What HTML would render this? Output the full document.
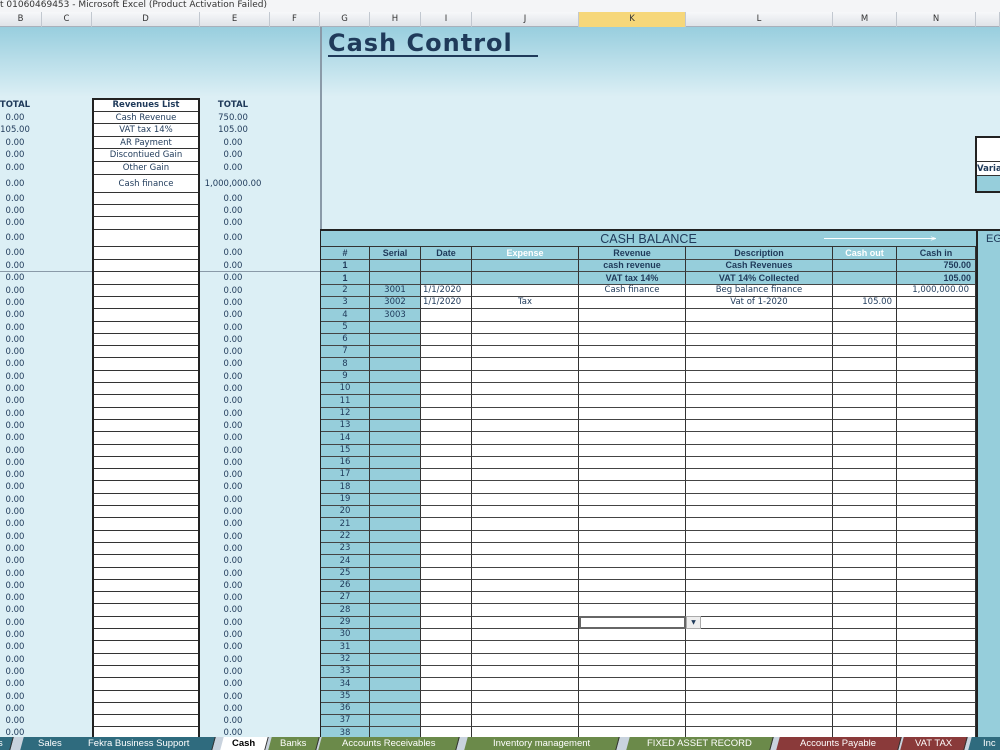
<!DOCTYPE html>
<html><head><meta charset="utf-8"><style>
*{margin:0;padding:0;box-sizing:border-box}
body{width:1000px;height:750px;overflow:hidden;position:relative;background:#dceff5;font-family:"DejaVu Sans","Liberation Sans",sans-serif;font-size:9px;color:#1f3a5a}
.a{position:absolute}
#tb{left:0;top:0;width:1000px;height:12px;background:#f4f5f7;font-size:9px;color:#333;line-height:11px;white-space:nowrap}
#ch{left:0;top:12px;width:1000px;height:15px;background:linear-gradient(#f7f8fa,#dfe3e8);border-bottom:1px solid #a8b0bb}
.ch{position:absolute;top:0;height:15px;border-right:1px solid #c2c8d0;text-align:center;font-size:8.5px;line-height:15px;color:#333}
#grad{left:0;top:27px;width:1000px;height:70px;background:linear-gradient(#98cede,#dceff5)}
.c{position:absolute;white-space:nowrap;overflow:hidden;text-align:center;font-size:8.5px}
.tab{position:absolute;top:737px;height:13px;font-size:9.5px;line-height:13px;color:#fff;text-align:center;white-space:nowrap;font-family:"Liberation Sans",sans-serif;transform:skewX(-15deg)}
.tab span{display:inline-block;transform:skewX(15deg)}
</style></head><body>
<div id="tb" class="a">t 01060469453 - Microsoft Excel (Product Activation Failed)</div>
<div id="ch" class="a"></div>
<div id="grad" class="a"></div>
<div class="a" style="left:320px;top:27px;width:2px;height:710px;background:#8a9aa8"></div>
<div class="a" style="left:0;top:271px;width:320px;height:1px;background:#8a9aa8"></div>
<div class="a" style="left:328px;top:29px;font-family:'DejaVu Sans',sans-serif;font-weight:bold;font-size:24px;color:#1f3a5a;letter-spacing:1px">Cash Control</div>
<div class="a" style="left:328px;top:55px;width:210px;height:1.5px;background:#1f3a5a"></div>
<div class="a" style="left:975px;top:136px;width:30px;height:57px;border:2px solid #222;background:#fff"></div>
<div class="a" style="left:977px;top:161px;width:30px;height:14px;border-top:1px solid #333;font-weight:bold;font-size:8.5px;line-height:14px">Varia</div>
<div class="a" style="left:977px;top:175px;width:30px;height:16px;background:#96cedb;border-top:1px solid #333"></div>
<div id="root"></div>
<script>
var root=document.getElementById('root');var h='';
var cols=[['B',0,42],['C',42,92],['D',92,200],['E',200,270],['F',270,320],['G',320,370],['H',370,421],['I',421,472],['J',472,579],['K',579,686],['L',686,833],['M',833,897],['N',897,976],['',976,1000]];
var ch='';cols.forEach(function(c){ch+='<div class="ch" style="left:'+c[1]+'px;width:'+(c[2]-c[1])+'px;'+(c[0]=='K'?'background:#f6d77a;':'')+'">'+c[0]+'</div>'});
document.getElementById('ch').innerHTML=ch;
h+='<div class="a" style="left:92px;top:98px;width:108px;height:640px;border:2px solid #222;border-bottom:none;background:#fff"></div>';
var lab2=['Revenues List','Cash Revenue','VAT tax 14%','AR Payment','Discontiued Gain','Other Gain','Cash finance'];
var lr=[[99,112],[112,124],[124,137],[137,149],[149,162],[162,175],[175,193],[193,205],[205,217],[217,230],[230,247],[247,260]];
for(var k=0;k<39;k++)lr.push([Math.round(260+k*12.3),Math.round(260+(k+1)*12.3)]);
lr.forEach(function(r,i){
 var t=r[0],hh=r[1]-r[0];
 var b=i==0?'TOTAL':(i==2?'105.00':'0.00');
 var e=i==0?'TOTAL':(i==1?'750.00':i==2?'105.00':i==6?'1,000,000.00':'0.00');
 var fw=i==0?'font-weight:bold;':'';
 h+='<div class="c" style="left:-8px;width:46px;top:'+t+'px;height:'+hh+'px;line-height:'+hh+'px;'+fw+'">'+b+'</div>';
 h+='<div class="c" style="left:200px;width:66px;top:'+t+'px;height:'+hh+'px;line-height:'+hh+'px;'+fw+'">'+e+'</div>';
 h+='<div class="c" style="left:94px;width:104px;top:'+t+'px;height:'+hh+'px;line-height:'+hh+'px;border-bottom:1px solid #333;'+fw+'">'+(lab2[i]||'')+'</div>';
});
h+='<div class="a" style="left:320px;top:229px;width:680px;height:510px;background:#fff;border-top:2px solid #222;border-left:2px solid #222"></div>';
h+='<div class="a" style="left:321px;top:231px;width:655px;height:16px;background:#96cedb;font-family:Liberation Sans,sans-serif;font-size:12.5px;text-align:center;line-height:16px;border-bottom:1px solid #333">CASH BALANCE</div>';
h+='<div class="a" style="left:824px;top:238px;width:112px;height:1px;background:#fff"></div><div class="a" style="left:930px;top:235px;color:#fff;font-size:8px;line-height:7px">&gt;</div>';
h+='<div class="a" style="left:976px;top:229px;width:2px;height:510px;background:#222"></div>';
h+='<div class="a" style="left:978px;top:231px;width:22px;height:16px;background:#96cedb;font-size:11px;line-height:16px;font-family:Liberation Sans,sans-serif;padding-left:8px">EG</div>';
h+='<div class="a" style="left:978px;top:247px;width:22px;height:492px;background:#96cedb"></div>';
var rc=cols.slice(5,13);
var hdr=['#','Serial','Date','Expense','Revenue','Description','Cash out','Cash in'];
var data={0:['1','','','','cash revenue','Cash Revenues','','750.00'],1:['1','','','','VAT tax 14%','VAT 14% Collected','','105.00'],2:['2','3001','1/1/2020','','Cash finance','Beg balance finance','','1,000,000.00'],3:['3','3002','1/1/2020','Tax','','Vat of 1-2020','105.00',''],4:['4','3003','','','','','','']};
function row(t,hh,vals,blue,bold,isHdr){
 rc.forEach(function(c,j){
  var bg=(blue||j<2)?'#96cedb':'#fff';
  var al='';
  if(!isHdr){
   if(j==2)al='text-align:left;padding-left:2px;';
   else if(j==7)al='text-align:right;padding-right:'+(bold?4:6)+'px;';
   else if(j==6)al='text-align:right;padding-right:4px;';
  }
  var col=(isHdr&&(j==3||j==6))?'color:#fff;':'';
  h+='<div class="c" style="left:'+(c[1]+(j==0?1:0))+'px;width:'+(c[2]-c[1]-(j==0?1:0))+'px;top:'+t+'px;height:'+hh+'px;line-height:'+(hh-1)+'px;background:'+bg+';border-right:1px solid #333;border-bottom:1px solid #444;'+al+col+(bold?'font-weight:bold;font-family:Liberation Sans,sans-serif;font-size:9px;':'')+'">'+vals[j]+'</div>';
 });
}
row(247,13,hdr,true,true,true);
for(var i=0;i<39;i++){var t=Math.round(260+i*12.3),t2=Math.round(260+(i+1)*12.3);var v=data[i]||[String(i),'','','','','','',''];row(t,t2-t,v,i<2,i<2,false);}
h+='<div class="a" style="left:579px;top:616px;width:107px;height:13px;border:2px solid #666;background:#fff"></div>';
h+='<div class="a" style="left:686px;top:616px;width:15px;height:13px;background:#eee;border:1px solid #aaa;font-size:6px;text-align:center;line-height:12px">&#9660;</div>';
h+='<div class="a" style="left:0;top:737px;width:1000px;height:13px;background:#c9d3de"></div>';
var tabs=[[-10,22,'#2f6b7e','s'],[22,56,'#2f6b7e','Sales'],[64,150,'#2f6b7e','Fekra Business Support'],[222,45,'#fff','Cash'],[270,48,'#6b8a4a','Banks'],[320,138,'#6b8a4a','Accounts Receivables'],[466,152,'#6b8a4a','Inventory management'],[628,144,'#6b8a4a','FIXED ASSET RECORD'],[778,122,'#8a3a3a','Accounts Payable'],[902,64,'#8a3a3a','VAT TAX'],[970,40,'#2f6b7e','Inc']];
tabs.forEach(function(t){h+='<div class="tab" style="left:'+t[0]+'px;width:'+t[1]+'px;background:'+t[2]+';border-right:1px solid #333;'+(t[3]=='Cash'?'color:#000;font-weight:bold;':'')+'"><span>'+t[3]+'</span></div>'});
root.innerHTML=h;
</script>
</body></html>
